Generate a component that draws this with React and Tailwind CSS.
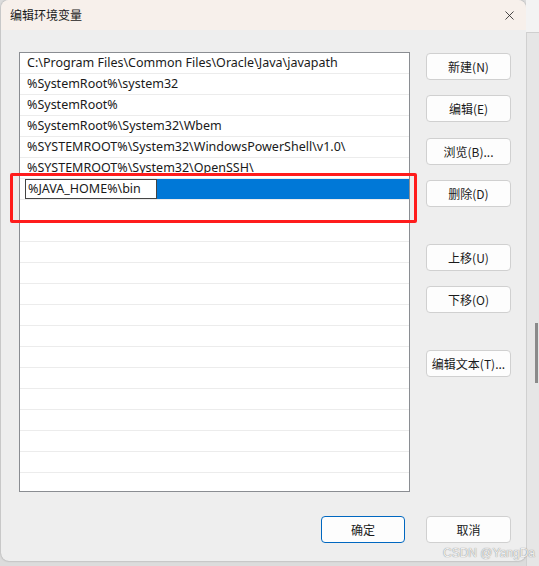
import { X } from "lucide-react";

const font = "[font-family:'Segoe_UI','Noto_Sans','Noto_Sans_CJK_SC',sans-serif]";
const cjk = "[font-family:'Noto_Sans_CJK_SC','Noto_Sans',sans-serif]";

const paths = [
  "C:\\Program Files\\Common Files\\Oracle\\Java\\javapath",
  "%SystemRoot%\\system32",
  "%SystemRoot%",
  "%SystemRoot%\\System32\\Wbem",
  "%SYSTEMROOT%\\System32\\WindowsPowerShell\\v1.0\\",
  "%SYSTEMROOT%\\System32\\OpenSSH\\",
];

const btnBase =
  "flex h-[27px] shrink-0 items-center justify-center rounded-[4px] border bg-[#fdfdfd] text-[12px] text-[#1a1a1a] " + cjk;
const btn = btnBase + " w-[85px] border-[#d0d0d0]";

function Row({ children }) {
  return <div className="flex h-[21px] items-center border-b border-[#ececec] pl-[7px]">{children}</div>;
}

export default function App() {
  const empty = Array.from({ length: 14 });
  return (
    <div className="relative flex h-[566px] w-[539px] overflow-hidden bg-[#dcdcdc] pl-px">
      <div className="flex h-[561px] w-[525px] shrink-0 flex-col overflow-hidden rounded-lg bg-[#eeeeee] shadow-[0_0_2px_rgba(0,0,0,0.35)]">
        <div className="flex h-[30px] shrink-0 items-center justify-between bg-[#f7f0eb] pl-[9px] pr-[9px]">
          <span className={"text-[12px] text-[#1a1a1a] " + cjk}>编辑环境变量</span>
          <X size={15} strokeWidth={1.3} className="text-[#222]" />
        </div>
        <div className="flex flex-1 flex-col pl-[18px] pt-[22px]">
          <div className="flex gap-4">
            <div className="h-[440px] w-[391px] shrink-0 overflow-hidden border border-[#8a8d92] bg-white">
              <div className={"text-[12.5px] text-[#1a1a1a] " + font}>
                {paths.map((p) => (
                  <Row key={p}>{p}</Row>
                ))}
                <div className="flex h-[21px] items-center border-b border-[#ececec] pl-[5px]">
                  <div className="flex h-[20px] flex-1 items-stretch bg-[#0078d7]">
                    <div className="flex w-[132px] items-center border border-[#444] bg-white pl-[2px]">
                      %JAVA_HOME%\bin
                    </div>
                  </div>
                </div>
                {empty.map((_, i) => (
                  <Row key={i}>&nbsp;</Row>
                ))}
              </div>
            </div>
            <div className="flex flex-col pt-px">
              <div className={btn}>新建(N)</div>
              <div className={btn + " mt-[15px]"}>编辑(E)</div>
              <div className={btn + " mt-[16px]"}>浏览(B)...</div>
              <div className={btn + " mt-[15px]"}>删除(D)</div>
              <div className={btn + " mt-[37px]"}>上移(U)</div>
              <div className={btn + " mt-[15px]"}>下移(O)</div>
              <div className={btn + " mt-[37px]"}>编辑文本(T)...</div>
            </div>
          </div>
          <div className="mt-[24px] flex justify-end gap-[21px] pr-[15px]">
            <div className={btnBase + " w-[84px] border-[#0067c0]"}>确定</div>
            <div className={btn}>取消</div>
          </div>
        </div>
      </div>
      <div className="flex flex-1 flex-col">
        <div className="h-[33px] border-b border-[#cfcfcf] bg-[#f3f3f3]" />
        <div className="flex flex-1 justify-end border-l border-[#d0d0d0] bg-[#e6e6e6] pr-px">
          <div className="mt-[290px] h-[60px] w-[3px] bg-[#8a8a8a]" />
        </div>
      </div>
      <div className="pointer-events-none absolute left-[10px] top-[173px] h-[50px] w-[407px] rounded-[2px] border-[3px] border-[#ff1c1c]" />
      <div className="pointer-events-none absolute bottom-[4px] right-[4px] text-[12px] text-[#f0f0f0] [font-family:'Liberation_Sans',sans-serif] [text-shadow:0_0_1px_#666]">
        CSDN @YangDa
      </div>
    </div>
  );
}
